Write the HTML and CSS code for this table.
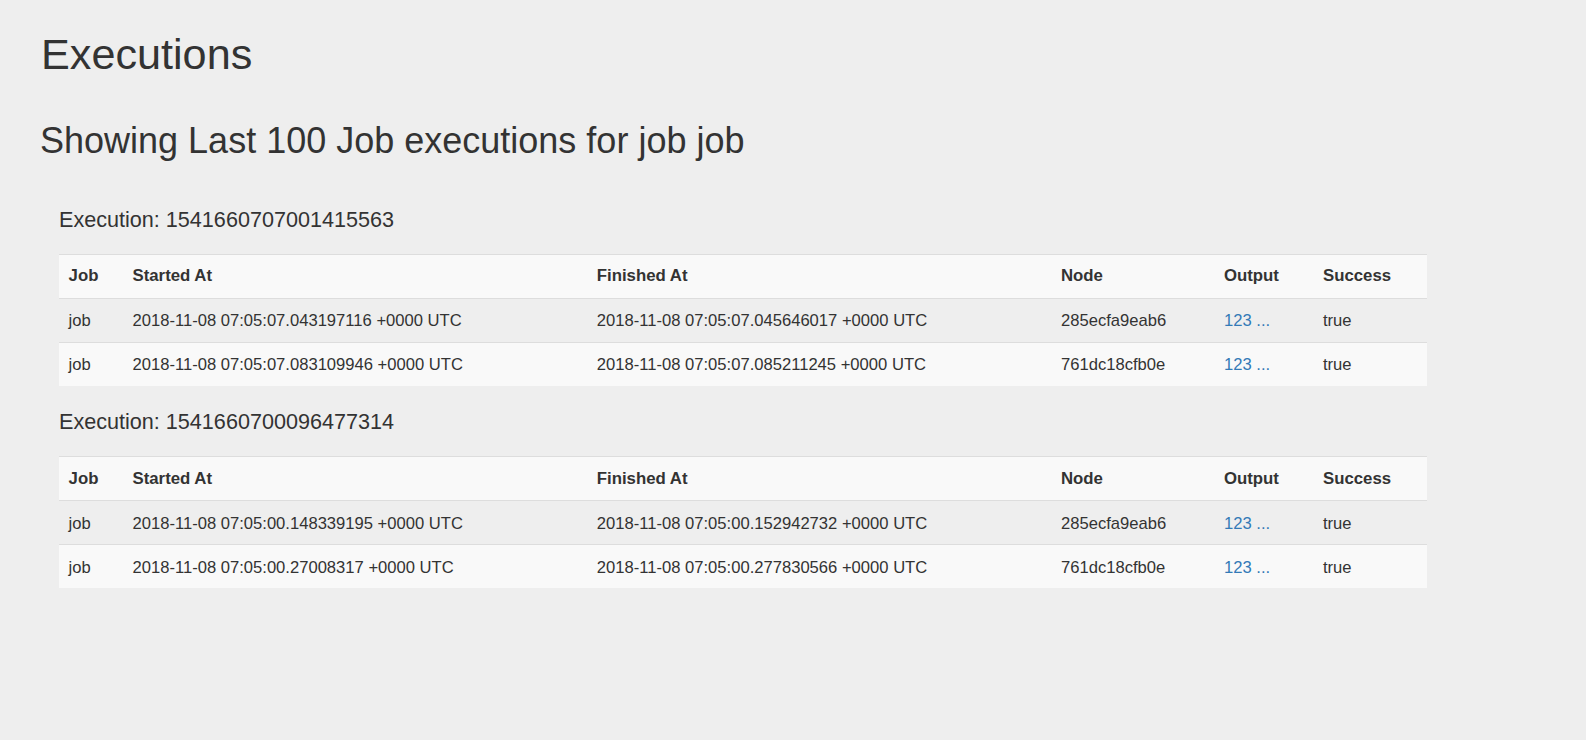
FILE: index.html
```html
<!DOCTYPE html>
<html lang="en">
<head>
<meta charset="utf-8">
<title>Executions</title>
<link rel="stylesheet" href="styles.css">
</head>
<body>
<div class="page">
  <h1 class="title">Executions</h1>
  <h2 class="subtitle">Showing Last 100 Job executions for job job</h2>

  <div class="section">
    <h4 class="exec-title">Execution: 1541660707001415563</h4>
    <table class="exec-table">
      <colgroup>
        <col class="c-job"><col class="c-start"><col class="c-finish"><col class="c-node"><col class="c-output"><col class="c-success">
      </colgroup>
      <tbody>
        <tr><th>Job</th><th>Started At</th><th>Finished At</th><th>Node</th><th>Output</th><th>Success</th></tr>
        <tr><td>job</td><td>2018-11-08 07:05:07.043197116 +0000 UTC</td><td>2018-11-08 07:05:07.045646017 +0000 UTC</td><td>285ecfa9eab6</td><td><a href="#">123 ...</a></td><td>true</td></tr>
        <tr><td>job</td><td>2018-11-08 07:05:07.083109946 +0000 UTC</td><td>2018-11-08 07:05:07.085211245 +0000 UTC</td><td>761dc18cfb0e</td><td><a href="#">123 ...</a></td><td>true</td></tr>
      </tbody>
    </table>

    <h4 class="exec-title next">Execution: 1541660700096477314</h4>
    <table class="exec-table">
      <colgroup>
        <col class="c-job"><col class="c-start"><col class="c-finish"><col class="c-node"><col class="c-output"><col class="c-success">
      </colgroup>
      <tbody>
        <tr><th>Job</th><th>Started At</th><th>Finished At</th><th>Node</th><th>Output</th><th>Success</th></tr>
        <tr><td>job</td><td>2018-11-08 07:05:00.148339195 +0000 UTC</td><td>2018-11-08 07:05:00.152942732 +0000 UTC</td><td>285ecfa9eab6</td><td><a href="#">123 ...</a></td><td>true</td></tr>
        <tr><td>job</td><td>2018-11-08 07:05:00.27008317 +0000 UTC</td><td>2018-11-08 07:05:00.277830566 +0000 UTC</td><td>761dc18cfb0e</td><td><a href="#">123 ...</a></td><td>true</td></tr>
      </tbody>
    </table>
  </div>
</div>
</body>
</html>
```

FILE: styles.css
```css
html, body {
  margin: 0;
  padding: 0;
}
body {
  background: #eeeeee;
  color: #333333;
  font-family: "Liberation Sans", Arial, Helvetica, sans-serif;
  font-size: 16.8px;
  line-height: 24px;
}
.page {
  padding: 0 40px;
}
.title {
  font-size: 43.2px;
  line-height: 1.1;
  font-weight: 500;
  margin: 31px 0 0 1px;
}
.subtitle {
  font-size: 36px;
  line-height: 1.1;
  font-weight: 500;
  margin: 42.2px 0 0 0;
}
.section {
  padding-left: 19px;
  width: 1368px;
}
.exec-title {
  font-size: 21.6px;
  line-height: 1.1;
  font-weight: 500;
  margin: 47.3px 0 22.6px 0;
}
.exec-title.next {
  margin-top: 0;
}
.exec-table {
  width: 100%;
  table-layout: fixed;
  border-collapse: collapse;
  border-spacing: 0;
  margin-bottom: 24px;
}
.c-job { width: 63.9px; }
.c-start { width: 464.3px; }
.c-finish { width: 464.2px; }
.c-node { width: 163px; }
.c-output { width: 99px; }
.c-success { width: 113.6px; }
.exec-table th,
.exec-table td {
  text-align: left;
  vertical-align: top;
  padding: 9.5px 9.6px;
  line-height: 24px;
  border-top: 1px solid #dddddd;
  white-space: nowrap;
}
.exec-table td {
  font-size: 16.6px;
  padding-top: 10.3px;
  padding-bottom: 8.7px;
}
.exec-table th {
  font-weight: bold;
}
.exec-table tr:nth-child(odd) {
  background: #f9f9f9;
}
.exec-table a {
  color: #337ab7;
  text-decoration: none;
}
```
